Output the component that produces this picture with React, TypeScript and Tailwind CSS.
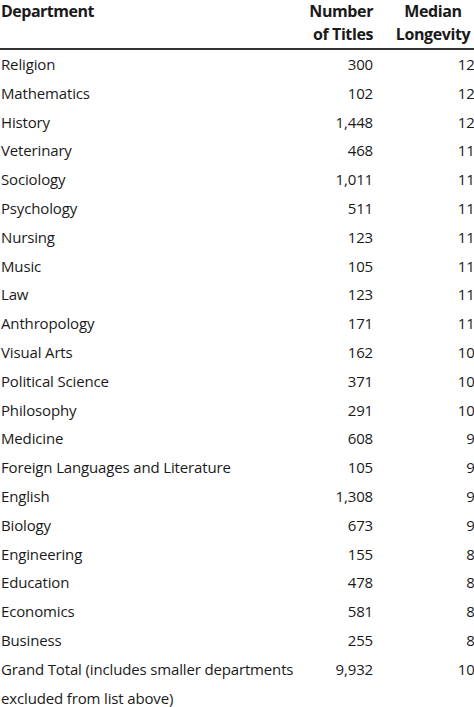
import React from "react";

const rows: [string, string, string][] = [
  ["Religion", "300", "125"],
  ["Mathematics", "102", "123"],
  ["History", "1,448", "121"],
  ["Veterinary", "468", "119"],
  ["Sociology", "1,011", "118"],
  ["Psychology", "511", "117"],
  ["Nursing", "123", "116"],
  ["Music", "105", "115"],
  ["Law", "123", "113"],
  ["Anthropology", "171", "111"],
  ["Visual Arts", "162", "109"],
  ["Political Science", "371", "108"],
  ["Philosophy", "291", "106"],
  ["Medicine", "608", "99"],
  ["Foreign Languages and Literature", "105", "98"],
  ["English", "1,308", "96"],
  ["Biology", "673", "94"],
  ["Engineering", "155", "89"],
  ["Education", "478", "88"],
  ["Economics", "581", "86"],
  ["Business", "255", "84"],
];

export default function App() {
  return (
    <div
      className="w-[474px] h-[707px] overflow-hidden bg-white text-[#1a1a1a]"
      style={{ fontFamily: '"Open Sans", "Noto Sans", sans-serif' }}
    >
      <table className="w-[493px] min-w-[493px] table-fixed border-collapse">
        <colgroup>
          <col className="w-[305px]" />
          <col className="w-[68px]" />
          <col className="w-[120px]" />
        </colgroup>
        <thead>
          <tr className="border-b-2 border-[#333]">
            <th className="p-0 pb-[2px] pl-[1px] text-left align-top text-[16px] leading-[23px] font-bold tracking-[-0.5px]">
              Department
            </th>
            <th className="p-0 pb-[2px] text-right align-top text-[16px] leading-[23px] font-bold tracking-[-0.4px] whitespace-nowrap">
              Number
              <br />
              of Titles
            </th>
            <th className="p-0 pb-[2px] text-center align-top text-[16px] leading-[23px] font-bold tracking-[-0.4px]">
              Median
              <br />
              Longevity
            </th>
          </tr>
        </thead>
        <tbody className="text-[15px] leading-[28.8px] tracking-[-0.15px]">
          {rows.map(([d, n, m]) => (
            <tr key={d}>
              <td className="p-0 pl-[1px]">{d}</td>
              <td className="p-0 text-right">{n}</td>
              <td className="p-0 pr-[10px] text-right">{m}</td>
            </tr>
          ))}
          <tr>
            <td className="p-0 pl-[1px] pr-[8px] align-top">
              Grand Total (includes smaller departments excluded from list above)
            </td>
            <td className="p-0 text-right align-top">9,932</td>
            <td className="p-0 pr-[10px] text-right align-top">104</td>
          </tr>
        </tbody>
      </table>
    </div>
  );
}
